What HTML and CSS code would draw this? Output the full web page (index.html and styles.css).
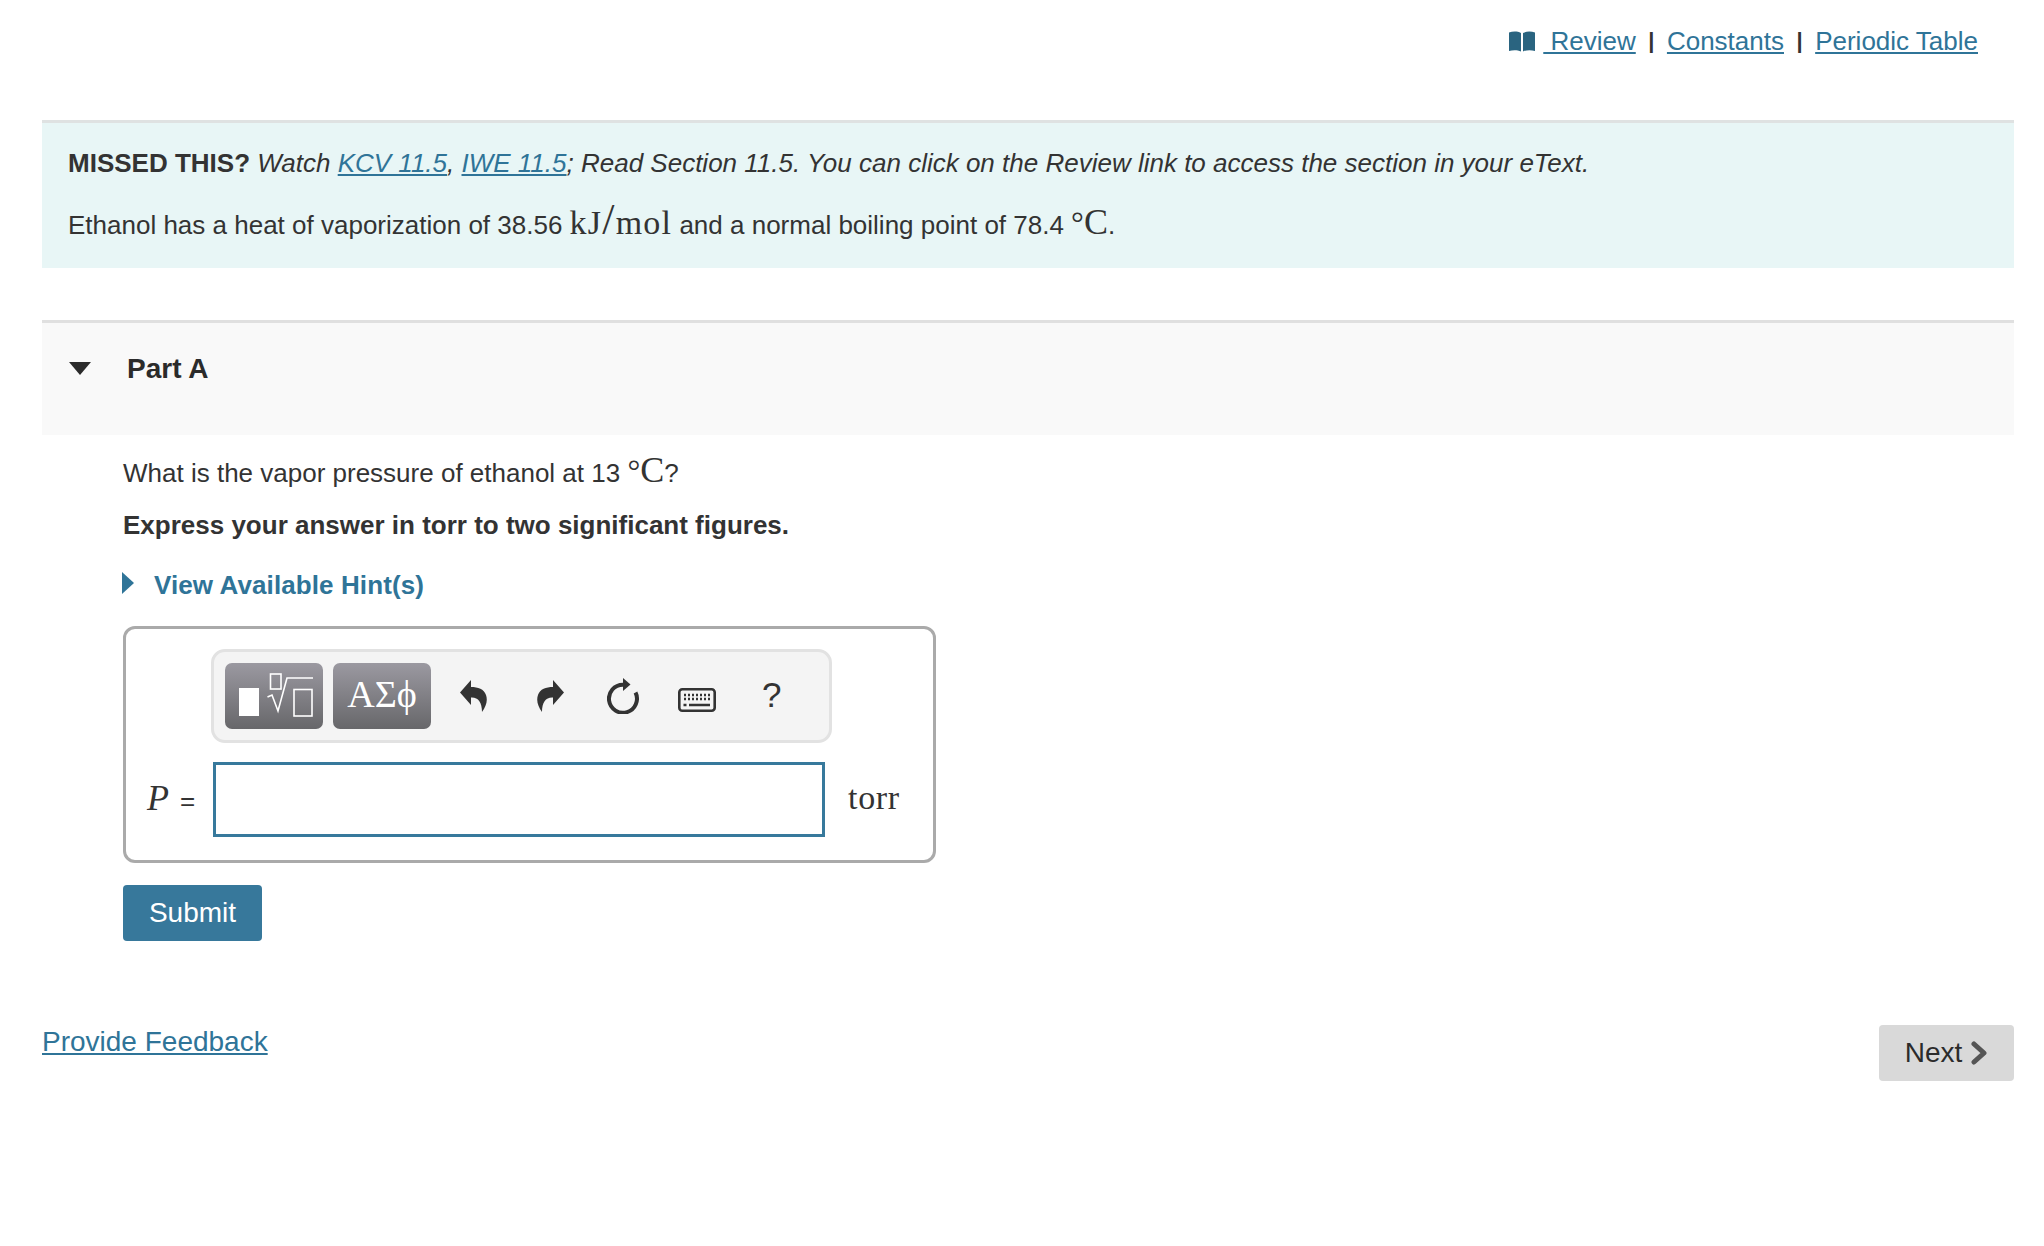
FILE: index.html
```html
<!DOCTYPE html>
<html lang="en">
<head>
<meta charset="utf-8">
<title>Part A</title>
<link rel="stylesheet" href="styles.css">
</head>
<body>
<nav class="top-links">
  <svg class="book" viewBox="0 0 26 21" width="26" height="21"><path d="M0 1.500C4 .2 8.500 .2 12 2v18.500C8.500 19 4 19 0 20z M14 2C17.500 .2 22 .2 26 1.500V20c-4-1-8.500-1-12 .5z" fill="#2a6480"/></svg>
  <a href="#">&nbsp;Review</a><span class="sep">|</span><a href="#">Constants</a><span class="sep">|</span><a href="#">Periodic Table</a>
</nav>
<section class="intro">
  <p class="missed"><b>MISSED THIS?</b> <i>Watch <a href="#">KCV 11.5</a>, <a href="#">IWE 11.5</a>; Read Section 11.5. You can click on the Review link to access the section in your eText.</i></p>
  <p class="stem">Ethanol has a heat of vaporization of 38.56 <span class="math">kJ<span class="slash">/</span>mol</span> and a normal boiling point of 78.4 <span class="math"><span class="deg">°</span><span class="cel">C</span></span>.</p>
</section>
<section class="part-head">
  <span class="tri-down"></span>
  <h2>Part A</h2>
</section>
<section class="part-body">
  <p class="question">What is the vapor pressure of ethanol at 13 <span class="math"><span class="deg">°</span><span class="cel">C</span></span>?</p>
  <p class="express">Express your answer in torr to two significant figures.</p>
  <a class="hint" href="#"><span class="tri-right"></span>View Available Hint(s)</a>
  <div class="answer">
    <div class="toolbar">
      <div class="tool-btn">
        <svg viewBox="0 0 98 66" width="98" height="66"><rect x="14" y="25" width="20" height="28" fill="#fff"/><g fill="none" stroke="#fff" stroke-width="1.600"><rect x="45.500" y="11" width="10.500" height="15"/><path d="M42.500 34l4.500-2 6 16 9-33h26"/><rect x="69" y="26.500" width="18" height="26.500"/></g></svg>
      </div>
      <div class="tool-btn greek">ΑΣϕ</div>
      <div class="tool-icons">
        <svg class="undo" viewBox="0 0 27 32" width="27" height="32"><path d="M11 0L0 12.500 11 25v-7.500C18 17 22 22 22 32c4-6 6-11 4-17C24 9 18 7 11 7z" fill="#333"/></svg>
        <svg class="redo" viewBox="0 0 27 32" width="27" height="32"><path d="M16 0l11 12.500L16 25v-7.500C9 17 5 22 5 32 1 26-1 21 1 15 3 9 9 7 16 7z" fill="#333"/></svg>
        <svg class="reset" viewBox="0 0 32 36" width="32" height="36"><path d="M16 6.700A14 14 0 1 0 28.500 14.500" fill="none" stroke="#333" stroke-width="4"/><path d="M16 0l7.500 6.500L16 13z" fill="#333"/></svg>
        <svg class="keys" viewBox="0 0 38 24" width="38" height="24"><rect x="1.300" y="1.300" width="35.400" height="21.400" rx="3" fill="none" stroke="#333" stroke-width="2.600"/><path d="M6 7h26M6 11h26" stroke="#333" stroke-width="2.400" stroke-dasharray="2 2"/><path d="M5.500 17h3M11 17h21" stroke="#333" stroke-width="2.400"/></svg>
        <span class="help">?</span>
      </div>
    </div>
    <div class="answer-row">
      <span class="var"><i>P</i> <span class="eq">=</span></span>
      <div class="input" role="textbox"></div>
      <span class="unit">torr</span>
    </div>
  </div>
  <button class="submit" type="button">Submit</button>
</section>
<footer class="foot">
  <a class="feedback" href="#">Provide Feedback</a>
  <button class="next" type="button">Next<svg viewBox="0 0 18 24" width="18" height="24"><path d="M4 3l10 9-10 9" fill="none" stroke="#555" stroke-width="5" stroke-linecap="round" stroke-linejoin="round"/></svg></button>
</footer>
</body>
</html>
```
FILE: styles.css
```css
* { box-sizing: border-box; }
html, body { margin: 0; background: #fff; }
body {
  padding: 0 30px 0 42px;
  font-family: "Liberation Sans", Arial, sans-serif;
  font-size: 26px;
  line-height: 32px;
  color: #333;
  height: 1246px;
  overflow: hidden;
}
a { color: #2f7498; text-decoration: underline; }
p { margin: 0; }

.top-links {
  height: 120px;
  padding: 25px 36px 0 0;
  display: flex;
  justify-content: flex-end;
  align-items: flex-start;
}
.book { margin: 6px 8px 0 0; }
.sep { margin: 0 12.500px; font-size: 22px; font-weight: 700; }

.intro {
  height: 148px;
  background: #e8f6f6;
  border-top: 3px solid #dfe2e2;
  padding: 24px 26px 0;
}
.missed { height: 32px; }
.stem { margin-top: 27px; height: 36px; white-space: nowrap; }
.math { font-family: "Liberation Serif", "Times New Roman", serif; font-size: 34px; letter-spacing: 1.200px; }
.slash { font-size: 44px; line-height: 0; font-weight: 400; }
.cel { font-size: 36px; letter-spacing: 0; }
.deg { font-size: 32px; line-height: 0; letter-spacing: 0; }

.part-head {
  margin-top: 52px;
  height: 115px;
  background: #f9f9f9;
  border-top: 3px solid #e0e0e0;
  display: flex;
  align-items: flex-start;
  padding: 30px 0 0 27px;
}
.part-head h2 { margin: 0 0 0 36px; font-size: 28px; line-height: 32px; font-weight: 700; color: #2b2b2b; }
.tri-down {
  margin-top: 9px;
  border-left: 11px solid transparent;
  border-right: 11px solid transparent;
  border-top: 13px solid #2b2b2b;
}

.part-body { padding: 17px 0 0 81px; display: flex; flex-direction: column; align-items: flex-start; }
.question { height: 36px; line-height: 36px; white-space: nowrap; }
.express { margin-top: 21px; font-weight: 700; height: 32px; }
.hint {
  margin-top: 28px;
  display: flex;
  align-items: center;
  font-weight: 700;
  height: 32px;
  letter-spacing: .1px;
  text-decoration: none;
  color: #2f7498;
}
.tri-right {
  margin: -4px 20px 0 -1px;
  border-top: 11px solid transparent;
  border-bottom: 11px solid transparent;
  border-left: 12px solid #2f7498;
}

.answer {
  margin-top: 25px;
  width: 813px;
  height: 237px;
  border: 3px solid #aaa;
  border-radius: 12px;
  padding: 20px 0 0 85px;
}
.toolbar {
  width: 621px;
  height: 94px;
  background: #f4f4f4;
  border: 3px solid #e2e2e2;
  border-radius: 14px;
  padding: 11px;
  display: flex;
  gap: 10px;
  align-items: flex-start;
}
.tool-btn {
  width: 98px;
  height: 66px;
  border-radius: 7px;
  background: linear-gradient(#9b99a1, #67676a);
}
.tool-btn svg { display: block; }
.greek {
  font-family: "Liberation Serif", serif;
  font-size: 38px;
  line-height: 62px;
  text-align: center;
  color: #fff;
}
.tool-icons { display: flex; align-items: center; height: 66px; margin-left: 19px; }
.tool-icons svg { display: block; flex: none; }
.tool-icons .redo { margin-left: 50px; }
.tool-icons .reset { margin-left: 43px; }
.tool-icons .keys { margin-left: 39px; margin-top: 8px; }
.help { font-size: 35px; color: #333; margin-left: 46px; margin-top: -2px; }

.answer-row { display: flex; align-items: center; margin: 19px 0 0 -64px; }
.var { width: 66px; font-family: "Liberation Serif", serif; font-size: 36px; white-space: nowrap; }
.eq { font-family: "Liberation Sans", sans-serif; font-size: 26px; margin-left: 2px; }
.input { width: 612px; height: 75px; border: 3px solid #37799c; background: #fff; }
.unit { margin: -3px 0 0 23px; font-family: "Liberation Serif", serif; font-size: 34px; letter-spacing: .7px; }

.submit {
  margin-top: 22px;
  width: 139px;
  height: 56px;
  background: #37789b;
  border: 0;
  border-radius: 4px;
  color: #fff;
  font: 28px "Liberation Sans", sans-serif;
}

.foot { display: flex; justify-content: space-between; align-items: flex-start; margin-top: 84px; }
.feedback { font-size: 28px; margin-top: 1px; }
.next {
  width: 135px;
  height: 56px;
  background: #d9d9d9;
  border: 0;
  border-radius: 4px;
  color: #2b2b2b;
  font: 28px "Liberation Sans", sans-serif;
  display: flex;
  align-items: center;
  justify-content: center;
  gap: 8px;
}
```
